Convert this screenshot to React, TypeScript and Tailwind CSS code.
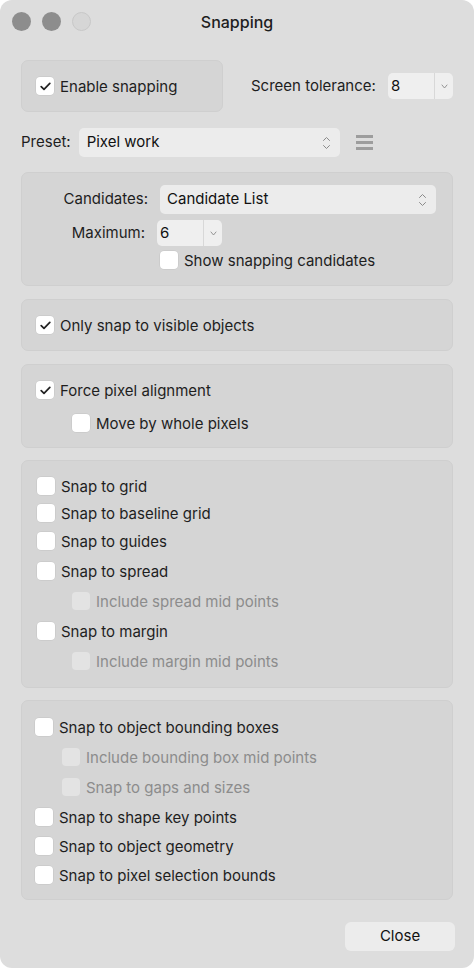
import React from "react";

const font = { fontFamily: "Inter, 'Liberation Sans', sans-serif" };

function Check({ checked = false, disabled = false }: { checked?: boolean; disabled?: boolean }) {
  return (
    <span
      className={`flex h-[18px] w-[18px] shrink-0 items-center justify-center rounded-[4px] ${
        disabled ? "bg-[#e3e3e3]" : "bg-white shadow-[0_0_0_0.5px_rgba(0,0,0,0.08)]"
      }`}
    >
      {checked && (
        <svg width="11" height="9" viewBox="0 0 11 9" fill="none">
          <path d="M1.2 4.6 L4 7.4 L9.8 1.4" stroke="#222" strokeWidth="1.7" strokeLinecap="round" strokeLinejoin="round" />
        </svg>
      )}
    </span>
  );
}

function CheckRow({
  label,
  checked,
  disabled,
  className = "",
}: {
  label: string;
  checked?: boolean;
  disabled?: boolean;
  className?: string;
}) {
  return (
    <div className={`flex items-center gap-[6px] ${className}`}>
      <Check checked={checked} disabled={disabled} />
      <span className={`text-[15px] leading-none ${disabled ? "text-[#8c8c8c]" : "text-[#1e1e1e]"}`}>{label}</span>
    </div>
  );
}

function UpDown() {
  return (
    <svg width="9" height="16" viewBox="0 0 9 16" fill="none">
      <path d="M1.5 5.5 L4.5 2.5 L7.5 5.5" stroke="#8a8a8a" strokeWidth="1" strokeLinecap="round" strokeLinejoin="round" />
      <path d="M1.5 10.5 L4.5 13.5 L7.5 10.5" stroke="#8a8a8a" strokeWidth="1" strokeLinecap="round" strokeLinejoin="round" />
    </svg>
  );
}

function Combo({ value, width }: { value: string; width: string }) {
  return (
    <div className={`flex h-[26px] items-stretch rounded-[5px] bg-[#efefef] ${width}`}>
      <span className="flex flex-1 items-center pl-[3px] text-[15px] text-[#111]">{value}</span>
      <span className="flex w-[19px] items-center justify-center border-l border-[#d8d8d8]">
        <svg width="7" height="5" viewBox="0 0 7 5" fill="none">
          <path d="M1 1 L3.5 4 L6 1" stroke="#8a8a8a" strokeWidth="0.9" strokeLinecap="round" strokeLinejoin="round" />
        </svg>
      </span>
    </div>
  );
}

function Group({ children, className = "" }: { children: React.ReactNode; className?: string }) {
  return (
    <div className={`rounded-[7px] border border-[#cfcfcf] bg-[#d5d5d5] ${className}`}>{children}</div>
  );
}

export default function App() {
  return (
    <div className="h-[970px] w-[474px] bg-white" style={font}>
      <div className="flex h-[968px] flex-col rounded-[12px] bg-[#dddddd] px-[21px]">
        {/* title bar */}
        <div className="relative -mx-[21px] flex h-[42px] items-center gap-[11px] px-[12px]">
          <span className="h-[19px] w-[19px] rounded-full bg-[#8d8d8d]" />
          <span className="h-[19px] w-[19px] rounded-full bg-[#8d8d8d]" />
          <span className="h-[19px] w-[19px] rounded-full border border-[#c8c8c8] bg-[#d6d6d6]" />
          <span className="absolute inset-x-0 top-[10px] text-center text-[16px] font-medium text-[#1e1e1e]">
            Snapping
          </span>
        </div>

        {/* enable + tolerance */}
        <div className="mt-[18px] flex items-center">
          <Group className="flex h-[52px] w-[202px] items-center pl-[14px]">
            <CheckRow label="Enable snapping" checked />
          </Group>
          <span className="ml-[28px] text-[15px] text-[#1e1e1e]">Screen tolerance:</span>
          <div className="ml-auto">
            <Combo value="8" width="w-[65px]" />
          </div>
        </div>

        {/* preset */}
        <div className="mt-[16px] flex h-[29px] items-center">
          <span className="text-[15px] text-[#1e1e1e]">Preset:</span>
          <div className="ml-[8px] flex h-[29px] w-[261px] items-center justify-between rounded-[5px] bg-[#ececec] pl-[8px] pr-[9px]">
            <span className="text-[15px] text-[#111]">Pixel work</span>
            <UpDown />
          </div>
          <div className="ml-[16px] flex w-[17px] flex-col gap-[3.5px]">
            <span className="h-[2.5px] bg-[#9d9d9d]" />
            <span className="h-[2.5px] bg-[#9d9d9d]" />
            <span className="h-[2.5px] bg-[#9d9d9d]" />
          </div>
        </div>

        {/* candidates */}
        <Group className="mt-[15px] grid h-[114px] grid-cols-[126px_1fr] content-start gap-x-[12px] pr-[16px] pt-[12px]">
          <span className="flex h-[29px] items-center justify-end text-[15px] text-[#1e1e1e]">Candidates:</span>
          <div className="flex h-[29px] items-center justify-between rounded-[5px] bg-[#ececec] pl-[7px] pr-[9px]">
            <span className="text-[15px] text-[#111]">Candidate List</span>
            <UpDown />
          </div>
          <span className="mt-[6px] flex h-[26px] items-center justify-end pr-[3px] text-[15px] text-[#1e1e1e]">
            Maximum:
          </span>
          <div className="mt-[6px] -ml-[3px]">
            <Combo value="6" width="w-[65px]" />
          </div>
          <span />
          <CheckRow label="Show snapping candidates" className="mt-[5px]" />
        </Group>

        <Group className="mt-[13px] flex h-[52px] items-center pl-[14px]">
          <CheckRow label="Only snap to visible objects" checked />
        </Group>

        <Group className="mt-[13px] flex h-[84px] flex-col pl-[14px] pt-[16px]">
          <CheckRow label="Force pixel alignment" checked />
          <CheckRow label="Move by whole pixels" className="ml-[36px] mt-[15px]" />
        </Group>

        <Group className="mt-[12px] flex h-[228px] flex-col pl-[15px] pt-[16px]">
          <CheckRow label="Snap to grid" />
          <CheckRow label="Snap to baseline grid" className="mt-[9px]" />
          <CheckRow label="Snap to guides" className="mt-[10px]" />
          <CheckRow label="Snap to spread" className="mt-[12px]" />
          <CheckRow label="Include spread mid points" disabled className="ml-[35px] mt-[12px]" />
          <CheckRow label="Snap to margin" className="mt-[12px]" />
          <CheckRow label="Include margin mid points" disabled className="ml-[35px] mt-[12px]" />
        </Group>

        <Group className="mt-[12px] flex h-[200px] flex-col pl-[13px] pt-[17px]">
          <CheckRow label="Snap to object bounding boxes" />
          <CheckRow label="Include bounding box mid points" disabled className="ml-[27px] mt-[12px]" />
          <CheckRow label="Snap to gaps and sizes" disabled className="ml-[27px] mt-[12px]" />
          <CheckRow label="Snap to shape key points" className="mt-[12px]" />
          <CheckRow label="Snap to object geometry" className="mt-[11px]" />
          <CheckRow label="Snap to pixel selection bounds" className="mt-[11px]" />
        </Group>

        <div className="mt-[22px] flex justify-end -mr-[2px]">
          <button className="flex h-[29px] w-[110px] items-center justify-center rounded-[6px] bg-[#ececec] text-[15px] text-[#111]">
            Close
          </button>
        </div>
      </div>
    </div>
  );
}
